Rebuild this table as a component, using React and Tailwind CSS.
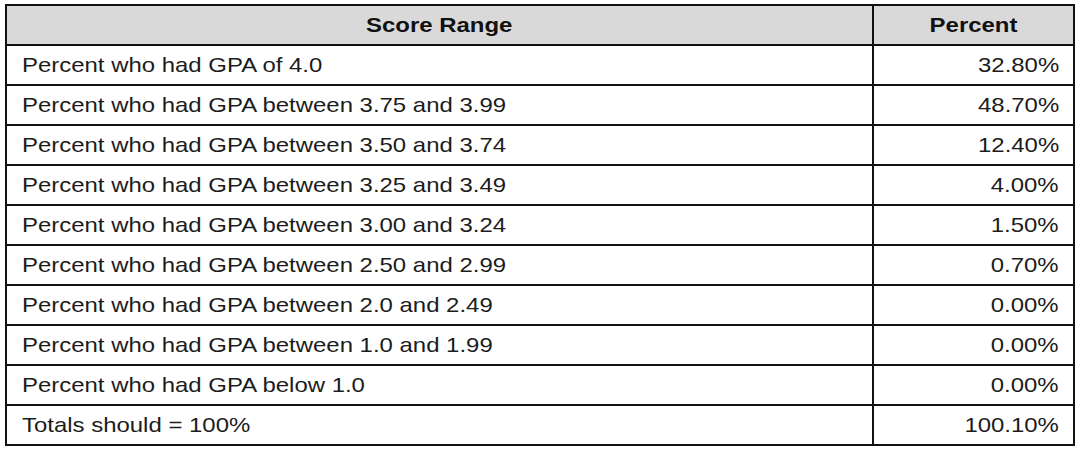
import React from 'react';

const ROWS = [
    ["Percent who had GPA of 4.0", "32.80%"],
    ["Percent who had GPA between 3.75 and 3.99", "48.70%"],
    ["Percent who had GPA between 3.50 and 3.74", "12.40%"],
    ["Percent who had GPA between 3.25 and 3.49", "4.00%"],
    ["Percent who had GPA between 3.00 and 3.24", "1.50%"],
    ["Percent who had GPA between 2.50 and 2.99", "0.70%"],
    ["Percent who had GPA between 2.0 and 2.49", "0.00%"],
    ["Percent who had GPA between 1.0 and 1.99", "0.00%"],
    ["Percent who had GPA below 1.0", "0.00%"],
    ["Totals should = 100%", "100.10%"]
];

// the source screenshot is stretched sideways, so glyphs get a scale-x
const App = () => {
    return (
        <div className="w-[1080px] h-[454px] bg-white pl-[5px] pt-[4px] font-['Liberation_Sans',Arial,sans-serif]">
            <table className="w-[1070px] border-collapse border-2 border-[#111] table-fixed">
                <colgroup>
                    <col className="w-[867px]" />
                    <col />
                </colgroup>
                <thead>
                    <tr className="h-[40px] bg-[#d9d9d9]">
                        <th className="border-2 border-[#111] text-[21px] font-bold text-[#111] text-center">
                            <span className="inline-block scale-x-[1.14] origin-center">Score Range</span>
                        </th>
                        <th className="border-2 border-[#111] text-[21px] font-bold text-[#111] text-center">
                            <span className="inline-block scale-x-[1.14] origin-center">Percent</span>
                        </th>
                    </tr>
                </thead>
                <tbody>
                    {ROWS.map(([label, value]) => (
                        <tr key={label} className="h-[40px]">
                            <td className="border-2 border-[#111] pl-[15px] text-[21px] text-[#1c1c1c] text-left whitespace-nowrap">
                                <span className="inline-block scale-x-[1.14] origin-left">{label}</span>
                            </td>
                            <td className="border-2 border-[#111] pr-[14px] text-[21px] text-[#1c1c1c] text-right whitespace-nowrap">
                                <span className="inline-block scale-x-[1.14] origin-right">{value}</span>
                            </td>
                        </tr>
                    ))}
                </tbody>
            </table>
        </div>
    );
};

export default App;
